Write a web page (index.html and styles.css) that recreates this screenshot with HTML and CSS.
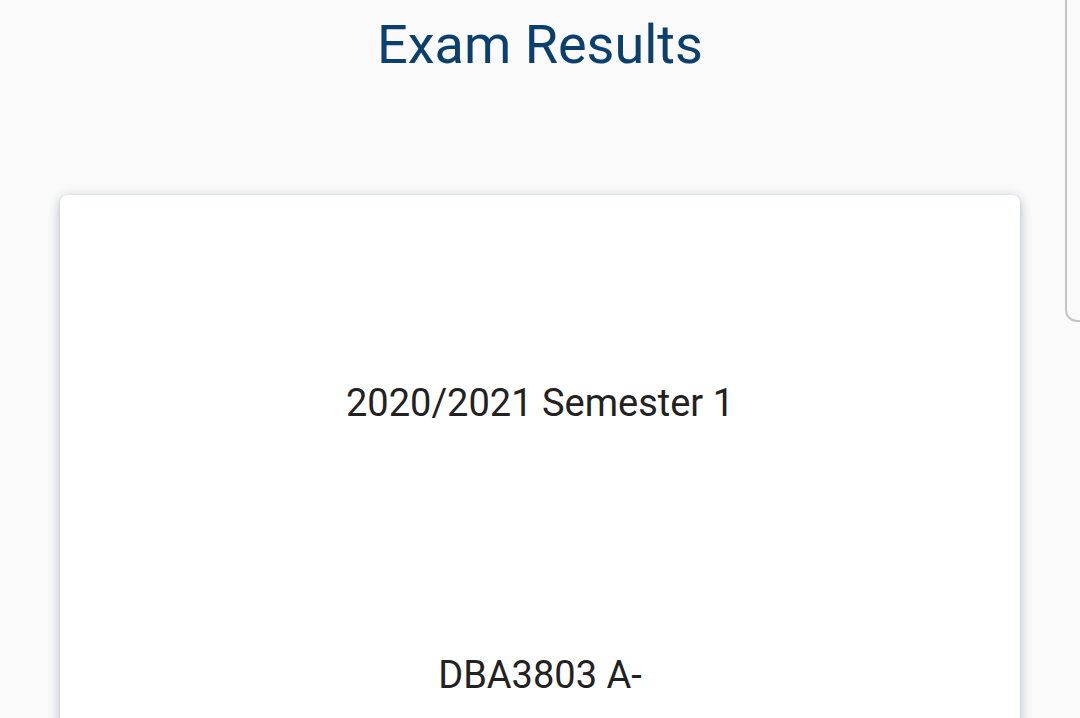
FILE: index.html
```html
<!DOCTYPE html>
<html>
<head>
<meta charset="utf-8">
<link rel="stylesheet" href="styles.css">
</head>
<body>
<div class="page">
  <h1 class="title">Exam Results</h1>
  <div class="card">
    <p class="semester">2020/2021 Semester 1</p>
    <p class="result">DBA3803 A-</p>
  </div>
</div>
<div class="side-panel"></div>
</body>
</html>
```

FILE: styles.css
```css
html, body {
  margin: 0;
  padding: 0;
  background: #fafafa;
  overflow: hidden;
  height: 718px;
}
.page {
  font-family: Roboto, "Noto Sans", sans-serif;
  display: flex;
  flex-direction: column;
  align-items: center;
}
.title {
  margin: 11px 0 0 0;
  font-weight: 400;
  font-size: 54px;
  line-height: 68px;
  color: #0b3f6e;
}
.card {
  margin-top: 116px;
  width: 960px;
  height: 700px;
  background: #ffffff;
  border-radius: 8px;
  box-shadow: 0 3px 12px rgba(50, 60, 90, 0.33), 0 1px 3px rgba(50, 60, 90, 0.15);
  display: flex;
  flex-direction: column;
  align-items: center;
}
.semester {
  margin: 185px 0 0 0;
  font-size: 38px;
  line-height: 46px;
  color: #222222;
}
.result {
  margin: 226px 0 0 0;
  font-size: 38px;
  line-height: 46px;
  color: #222222;
}
.side-panel {
  position: absolute;
  top: -20px;
  left: 1065px;
  width: 40px;
  height: 342px;
  border: 2px solid #c4c4c4;
  border-radius: 12px;
  background: #fafafa;
  box-sizing: border-box;
}
```
